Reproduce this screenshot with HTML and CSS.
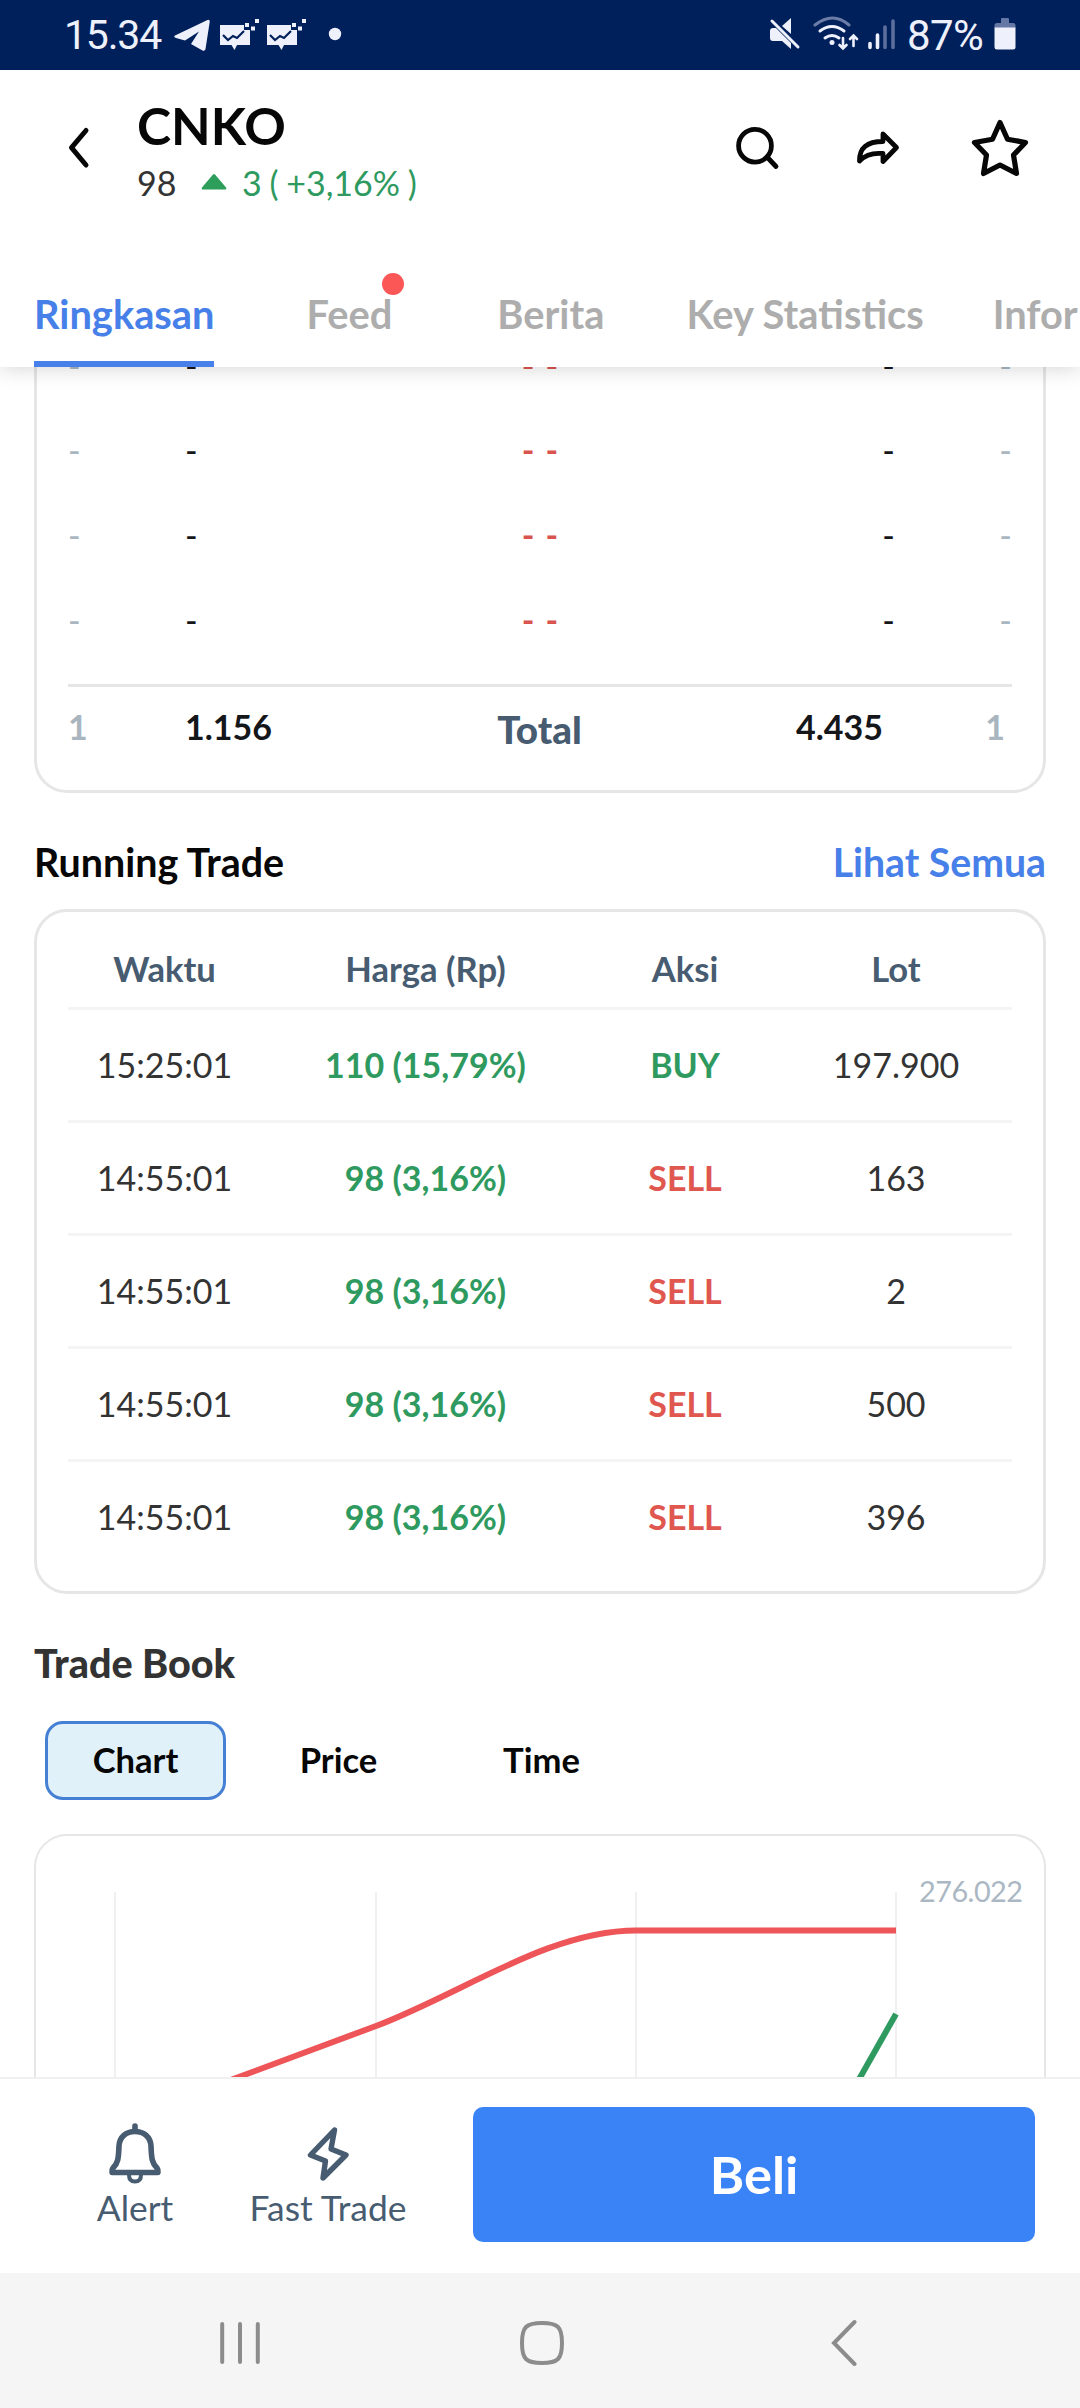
FILE: index.html
```
<!DOCTYPE html>
<html lang="id">
<head>
    <meta charset="UTF-8">
    <meta name="viewport" content="width=device-width, initial-scale=1.0">
    <title>CNKO</title>
    <link rel="stylesheet" href="styles.css">
</head>
<body>
    <div class="screen">
        <div class="status-bar">
            <span class="clock">15.34</span>
            <svg class="status-icons" width="170" height="40" viewBox="0 0 170 40" fill="#eef1fb">
                <path d="M1 20.500L33.500 5Q36 4 35.700 7L31.500 34Q31 36.500 28.500 35.500L17 29L25 16.500L11 25.500L2 23Q-1 22 1 20.500Z"/>
                <g id="chat">
                    <path d="M46 10h24v5h6v15h-13l-2.500 5l-3-5h-11.500z"/>
                    <path d="M81 4h4v4h-4zM71 8h4v4h-4zM77 11.500h4v4h-4z"/>
                    <path d="M49 20l5 5l5-4l4 2l7-7" fill="none" stroke="#00205b" stroke-width="2.200"/>
                </g>
                <use href="#chat" x="47"/>
                <circle cx="161" cy="19" r="6.200"/>
            </svg>
            <svg class="status-system" width="128" height="40" viewBox="0 0 128 40" fill="#eef1fb">
                <path d="M1 16q0-3 3-3h3l15 15v6l-9-8h-9q-3 0-3-3zM13 11l9-8v16z"/>
                <path d="M3 6l26 26" stroke="#eef1fb" stroke-width="3" stroke-linecap="round"/>
                <g fill="none" stroke="#eef1fb" stroke-width="3" stroke-linecap="round">
                    <path d="M46 10q18-14 34 0" stroke="#6b7ca6"/>
                    <path d="M51 16q12-9 24 0M56 23q7-5 14 0"/>
                    <path d="M74 23v10M70.500 30l3.500 3.500l3.500-3.500M84.500 31v-10M81 24l3.500-3.500l3.500 3.500" stroke-width="2.600"/>
                </g>
                <circle cx="63" cy="27.500" r="2.500"/>
                <path d="M101 28.500v4M108.500 20v12.500" stroke="#eef1fb" stroke-width="3.600" stroke-linecap="round"/>
                <path d="M116 12v20.500M124 6v26.500" stroke="#5c6e9c" stroke-width="3.600" stroke-linecap="round"/>
            </svg>
            <span class="battery-text">87%</span>
            <svg width="22" height="34" viewBox="0 0 22 34">
                <path d="M7 1q0-1 1-1h6q1 0 1 1v4h4q2.500 0 2.500 2.500V10H.5V7.500Q.5 5 3 5h4z" fill="#6577a5"/>
                <path d="M.5 9.500h21V29q0 2.500-2.500 2.500H3Q.5 31.500.5 29z" fill="#eef1fb"/>
            </svg>
        </div>

        <header class="header">
            <svg class="back" width="24" height="44" viewBox="0 0 24 44" fill="none" stroke="#070707" stroke-width="5" stroke-linecap="round" stroke-linejoin="round">
                <path d="M19 4.500L4.500 21.700L19 39"/>
            </svg>
            <div class="stock">
                <h1>CNKO</h1>
                <div class="price">
                    <span class="last">98</span>
                    <svg width="26" height="18" viewBox="0 0 26 18"><path d="M12 1.500q1-1 2 0l11 13q1 2-1 2H2q-2 0-1-2z" fill="#2e9e5b"/></svg>
                    <span class="change">3 ( +3,16% )</span>
                </div>
            </div>
            <div class="actions">
                <svg width="48" height="48" viewBox="0 0 48 48" fill="none" stroke="#070707" stroke-width="4.800" stroke-linecap="round">
                    <circle cx="22" cy="21.700" r="16.400"/>
                    <path d="M35 34l8 8.500"/>
                </svg>
                <svg width="46" height="38" viewBox="0 0 46 38" fill="none" stroke="#070707" stroke-width="4.800" stroke-linejoin="round">
                    <path d="M28 5L41.500 18.500L28 32.500V24.500Q13 23 4.500 32Q4 12.500 28 12.500Z"/>
                </svg>
                <svg width="60" height="60" viewBox="0 0 60 60" fill="none" stroke="#070707" stroke-width="5.200" stroke-linejoin="round">
                    <path d="M30 4.500L37.500 21.200L55.500 24.500L43.500 37L46.500 55.500L30 47L13.500 55.500L16.500 37L4.500 24.500L22.500 21.200Z"/>
                </svg>
            </div>
        </header>

        <nav class="tabs">
            <span class="tab active">Ringkasan</span>
            <span class="tab feed">Feed<i class="dot"></i></span>
            <span class="tab berita">Berita</span>
            <span class="tab stats">Key Statistics</span>
            <span class="tab info">Infor</span>
        </nav>

        <main class="content">
            <section class="card order-book">
                <div class="order-row"><span>-</span><b>-</b><span class="bid-ask"><b>-</b><b>-</b></span><b>-</b><span>-</span></div>
                <div class="order-row"><span>-</span><b>-</b><span class="bid-ask"><b>-</b><b>-</b></span><b>-</b><span>-</span></div>
                <div class="order-row"><span>-</span><b>-</b><span class="bid-ask"><b>-</b><b>-</b></span><b>-</b><span>-</span></div>
                <div class="order-row"><span>-</span><b>-</b><span class="bid-ask"><b>-</b><b>-</b></span><b>-</b><span>-</span></div>
                <div class="order-row total"><span>1</span><b>1.156</b><strong>Total</strong><b>4.435</b><span>1</span></div>
            </section>

            <div class="section-head">
                <h2>Running Trade</h2>
                <a class="see-all">Lihat Semua</a>
            </div>

            <section class="card trades">
                <div class="trade-row trade-head"><span>Waktu</span><span>Harga (Rp)</span><span>Aksi</span><span>Lot</span></div>
                <div class="trade-row"><span>15:25:01</span><span class="up">110 (15,79%)</span><span class="up">BUY</span><span>197.900</span></div>
                <div class="trade-row"><span>14:55:01</span><span class="up">98 (3,16%)</span><span class="down">SELL</span><span>163</span></div>
                <div class="trade-row"><span>14:55:01</span><span class="up">98 (3,16%)</span><span class="down">SELL</span><span>2</span></div>
                <div class="trade-row"><span>14:55:01</span><span class="up">98 (3,16%)</span><span class="down">SELL</span><span>500</span></div>
                <div class="trade-row"><span>14:55:01</span><span class="up">98 (3,16%)</span><span class="down">SELL</span><span>396</span></div>
            </section>

            <h2 class="book-title">Trade Book</h2>
            <div class="chips">
                <span class="chip selected">Chart</span>
                <span class="chip">Price</span>
                <span class="chip">Time</span>
            </div>

            <section class="card chart">
                <svg class="plot" width="865" height="260" viewBox="0 0 865 260" fill="none">
                    <path d="M79 56V260M340 56V260M600 56V260M860 56V260" stroke="#f0f0f0" stroke-width="2"/>
                    <path d="M79 287L340 190C427 157 513 94.500 600 94.500H860" stroke="#ee5558" stroke-width="6"/>
                    <path d="M817 254L860 178" stroke="#2f9a60" stroke-width="6"/>
                </svg>
                <span class="axis-max">276.022</span>
            </section>
        </main>

        <footer class="bottom-bar">
            <div class="tool alert">
                <svg width="54" height="64" viewBox="0 0 54 64" fill="none" stroke="#475c71" stroke-width="5.600" stroke-linecap="round" stroke-linejoin="round">
                    <path d="M27 4V9M27 9.500C18 9.500 11.500 15 11 24C10.500 37 10 41 5 46Q3.500 48 4 50.500H50Q50.500 48 49 46C44 41 43.500 37 43 24C42.500 15 36 9.500 27 9.500Z"/>
                    <path d="M21 53q0 6.500 6 6.500t6-6.500" stroke-width="4"/>
                </svg>
                <span>Alert</span>
            </div>
            <div class="tool fast">
                <svg width="44" height="64" viewBox="0 0 44 64" fill="none" stroke="#475c71" stroke-width="5.400" stroke-linejoin="round">
                    <path d="M28.500 8L4.500 33L19.500 39L17 56L40 33L25 27Z"/>
                </svg>
                <span>Fast Trade</span>
            </div>
            <button class="buy">Beli</button>
        </footer>

        <div class="nav-bar">
            <svg width="40" height="44" viewBox="0 0 40 44" stroke="#8c8c8c" stroke-width="4" stroke-linecap="round"><path d="M2.200 3v38M20 3v38M37.800 3v38"/></svg>
            <svg class="home" width="46" height="46" viewBox="0 0 46 46" fill="none" stroke="#8c8c8c" stroke-width="4"><path d="M23 3C39 3 43 7 43 23S39 43 23 43S3 39 3 23S7 3 23 3Z"/></svg>
            <svg width="26" height="48" viewBox="0 0 26 48" fill="none" stroke="#8c8c8c" stroke-width="4" stroke-linecap="round"><path d="M23.500 3L3 24L23.500 45"/></svg>
        </div>
    </div>
</body>
</html>
```

FILE: styles.css
```
* {
    box-sizing: border-box;
}
body {
    margin: 0;
    background: #fff;
    color: #333;
    font-family: Lato, "Liberation Sans", sans-serif;
    font-size: 34px;
}
h1, h2 {
    margin: 0;
}
svg {
    display: block;
    flex: none;
}
.screen {
    display: flex;
    flex-direction: column;
    width: 1080px;
    height: 2408px;
    overflow: hidden;
}

/* status bar */
.status-bar {
    display: flex;
    align-items: center;
    flex: none;
    height: 70px;
    padding: 0 64px 0 64px;
    background: #00205b;
    color: #eef1fb;
    font-family: Roboto, sans-serif;
    font-size: 41px;
    letter-spacing: -1.2px;
}
.clock {
    width: 110px;
}
.status-system {
    margin-left: auto;
    margin-right: 10px;
}
.battery-text {
    width: 87px;
    font-size: 42px;
    letter-spacing: -0.6px;
}

/* header */
.header {
    display: flex;
    flex: none;
    height: 190px;
    padding: 25px 50px 0 67px;
}
.back {
    margin-top: 31px;
}
.stock {
    margin-left: 46px;
}
.stock h1 {
    color: #070707;
    font-size: 51.5px;
    line-height: 60px;
}
.price {
    display: flex;
    align-items: center;
    height: 54px;
    font-size: 34px;
}
.last {
    width: 64px;
}
.change {
    margin-left: 15px;
    color: #2f9a60;
    word-spacing: -1px;
}
.actions {
    display: flex;
    align-items: center;
    height: 106px;
    margin-left: auto;
}
.actions svg + svg {
    margin-left: 74px;
}
.actions svg + svg + svg {
    margin-left: 69px;
}

/* tabs */
.tabs {
    display: flex;
    flex: none;
    position: relative;
    z-index: 1;
    height: 107px;
    padding-left: 34px;
    background: #fff;
    box-shadow: 0 2px 20px rgba(0, 0, 0, 0.16);
    clip-path: inset(0 0 -30px 0);
    color: #adadad;
    font-size: 39.8px;
    font-weight: 700;
    line-height: 107px;
    white-space: nowrap;
}
.tab {
    position: relative;
    flex: none;
}
.tab.active {
    color: #4680e8;
    border-bottom: 6px solid #4680e8;
}
.feed {
    margin-left: 92px;
}
.berita {
    margin-left: 105px;
}
.stats {
    margin-left: 82px;
}
.info {
    margin-left: 69px;
}
.dot {
    position: absolute;
    top: 13px;
    right: -12px;
    width: 22px;
    height: 22px;
    border-radius: 50%;
    background: #fb5757;
}

.content {
    flex: 1;
    min-height: 0;
    padding: 0 34px;
    overflow: hidden;
}
.card {
    border: 3px solid #e6e6e6;
    border-radius: 33px;
}

/* order book */
.order-book {
    height: 493px;
    margin-top: -67px;
    padding: 19px 31px 0;
}
.order-row {
    display: grid;
    grid-template-columns: 117px 223px 1fr 223px 117px;
    align-items: center;
    height: 85px;
    color: #a9b6c0;
}
.order-row > b {
    color: #14161a;
    font-weight: 400;
}
.order-row > :nth-child(n+4) {
    text-align: right;
}
.bid-ask {
    display: flex;
    justify-content: center;
    gap: 11px;
    color: #d9544f;
}
.order-row.total {
    height: 82px;
    margin-top: 22px;
    padding-right: 7px;
    grid-template-columns: 117px 223px 1fr 218px 122px;
    border-top: 3px solid #e6e6e6;
    font-weight: 700;
}
.total > b {
    font-weight: 700;
}
.total strong {
    padding: 4px 0 0 6px;
    color: #475c71;
    font-size: 38.6px;
    text-align: center;
}

/* running trade */
.section-head {
    display: flex;
    justify-content: space-between;
    height: 116px;
    padding-top: 45px;
    font-size: 39.2px;
    line-height: 48px;
}
.section-head h2 {
    color: #070707;
    font-size: 39.4px;
}
.see-all {
    color: #4680e8;
    font-weight: 700;
}
.trades {
    height: 685px;
    padding: 0 31px;
}
.trade-row {
    display: grid;
    grid-template-columns: 193px 329px 190px 1fr;
    align-items: center;
    height: 113px;
    padding-bottom: 2px;
    border-bottom: 3px solid #f4f4f4;
    text-align: center;
}
.trade-row:last-child {
    padding-bottom: 5px;
    border-bottom: 0;
}
.trade-head {
    height: 98px;
    padding-top: 19px;
    color: #475c71;
    font-size: 34.6px;
    font-weight: 700;
}
.up {
    color: #2f9a60;
    font-weight: 700;
}
.down {
    color: #e0574f;
    font-weight: 700;
}

/* trade book */
.book-title {
    margin-top: 45px;
    font-size: 39.5px;
    font-weight: 900;
    line-height: 48px;
}
.chips {
    display: flex;
    gap: 22px;
    padding: 34px 0 0 11px;
}
.chip {
    width: 181px;
    height: 79px;
    border: 3px solid transparent;
    border-radius: 18px;
    color: #070707;
    font-size: 34.6px;
    font-weight: 700;
    line-height: 71px;
    text-align: center;
}
.chip.selected {
    border-color: #4680d4;
    background: #e1f1f9;
}
.chart {
    display: flex;
    height: 560px;
    margin-top: 34px;
    border-width: 2px;
}
.axis-max {
    margin: 37px 0 0 18px;
    color: #abb8c4;
    font-size: 28.8px;
    letter-spacing: -0.5px;
    line-height: 36px;
}

/* bottom bar */
.bottom-bar {
    display: flex;
    flex: none;
    height: 196px;
    border-top: 2px solid #f0f0f0;
    color: #475c71;
}
.tool {
    display: flex;
    flex-direction: column;
    align-items: center;
    padding-top: 43px;
    font-size: 35.4px;
    line-height: 43px;
}
.alert {
    width: 100px;
    margin-left: 85px;
}
.fast {
    width: 180px;
    margin-left: 53px;
}
.buy {
    width: 562px;
    height: 135px;
    margin: 28px 0 0 55px;
    padding: 0 0 3px;
    border: 0;
    border-radius: 10px;
    background: #3983f7;
    color: #fff;
    font: 700 52.5px Lato, sans-serif;
}

/* android navigation */
.nav-bar {
    display: flex;
    align-items: center;
    flex: none;
    height: 135px;
    padding: 4px 0 0 220px;
    background: #f5f5f5;
}
.home {
    margin: 0 266px 0 259px;
}
```
